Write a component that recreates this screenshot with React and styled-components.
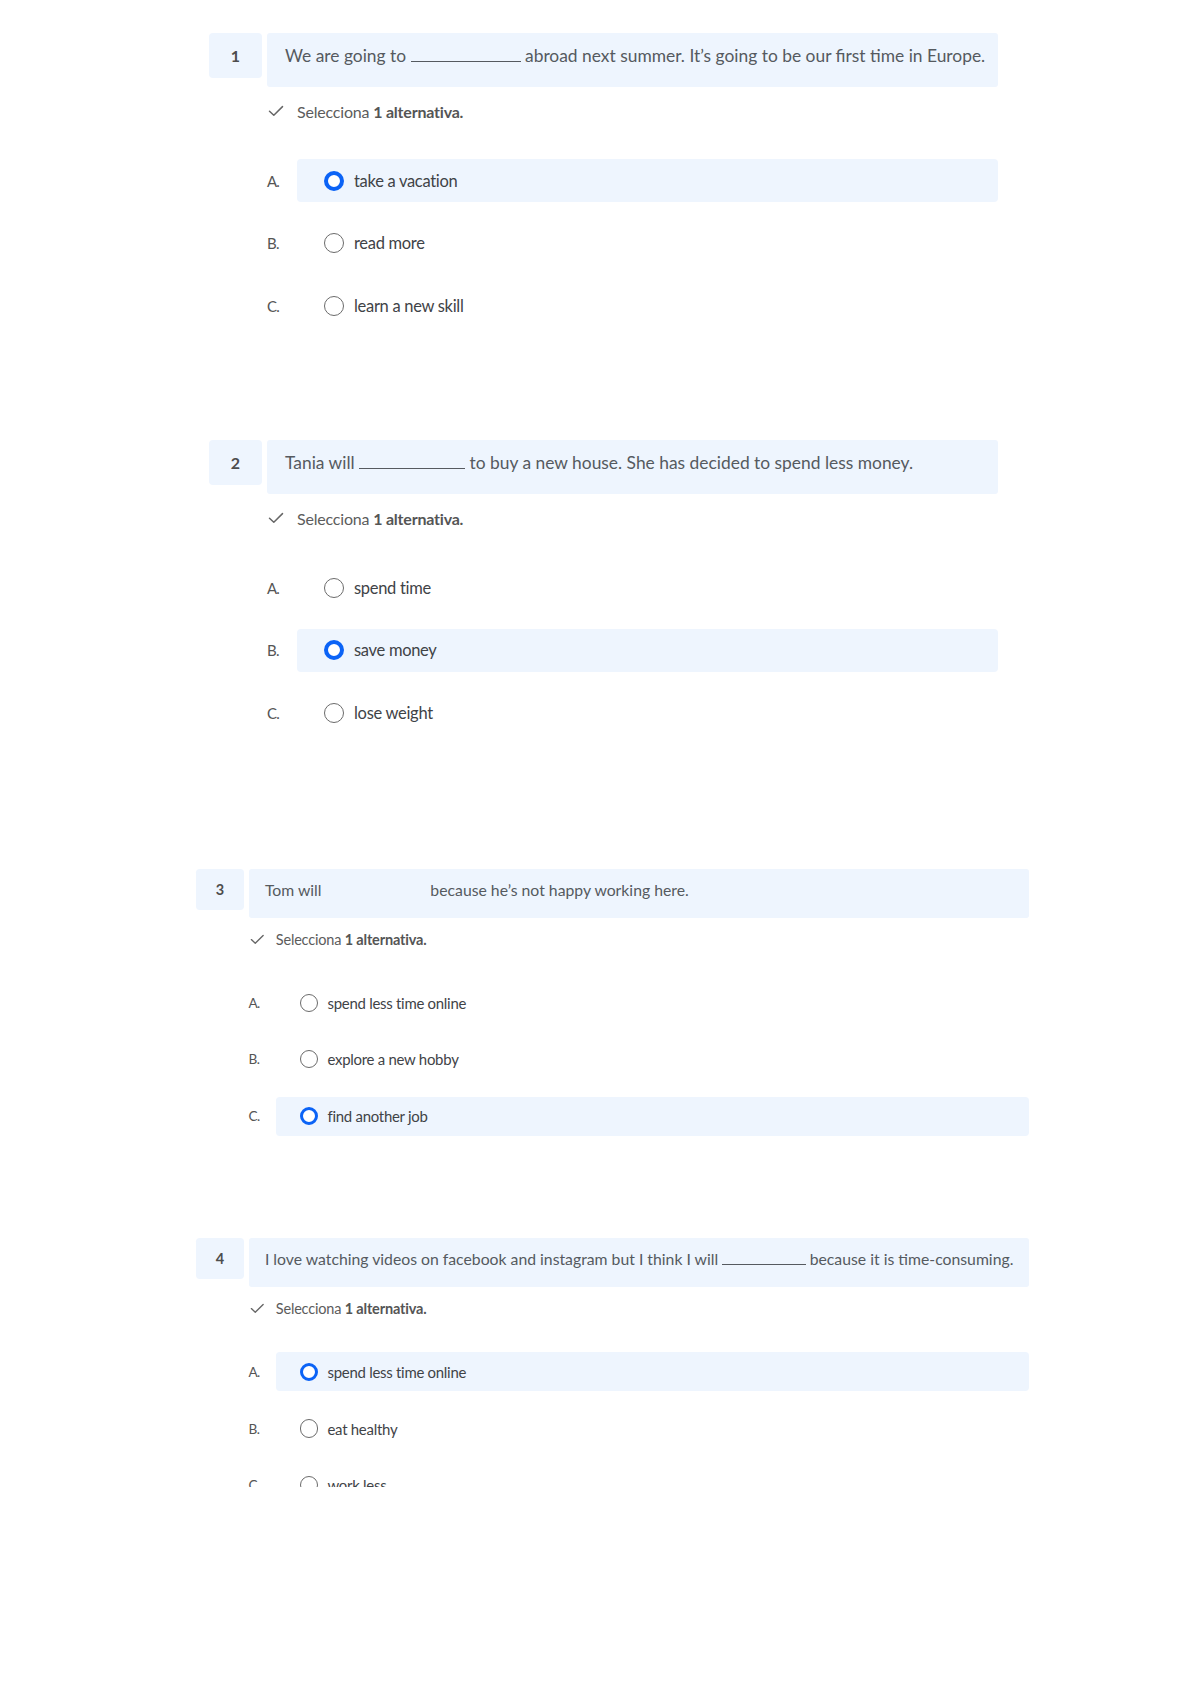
import React from "react";
import styled, { createGlobalStyle } from "styled-components";

const GlobalStyle = createGlobalStyle`
  body {
    margin: 0;
    background: #ffffff;
    font-family: Lato, "Open Sans", "Liberation Sans", sans-serif;
  }
`;

const questionsTop = [
  {
    num: 1,
    parts: ["We are going to ", { blank: 110 }, " abroad next summer. It’s going to be our first time in Europe."],
    options: ["take a vacation", "read more", "learn a new skill"],
    selected: 0,
  },
  {
    num: 2,
    parts: ["Tania will ", { blank: 106 }, " to buy a new house. She has decided to spend less money."],
    options: ["spend time", "save money", "lose weight"],
    selected: 1,
  },
];

const questionsBottom = [
  {
    num: 3,
    parts: ["Tom will", { blank: 120, hidden: true }, "because he’s not happy working here."],
    options: ["spend less time online", "explore a new hobby", "find another job"],
    selected: 2,
  },
  {
    num: 4,
    parts: ["I love watching videos on facebook and instagram but I think I will ", { blank: 92 }, " because it is time-consuming."],
    options: ["spend less time online", "eat healthy", "work less"],
    selected: 0,
  },
];

const Question = ({ q }) => (
  <Block>
    <Header>
      <NumBox>{q.num}</NumBox>
      <Statement>
        {q.parts.map((p, i) =>
          typeof p === "string" ? (
            <span key={i}>{p}</span>
          ) : (
            <Blank key={i} $width={p.blank} $hidden={p.hidden} />
          )
        )}
      </Statement>
    </Header>
    <Hint>
      <svg width="16" height="12" viewBox="0 0 16 12" fill="none">
        <path d="M1.5 6.2 L5.8 10.2 L14.5 1.6" stroke="#666" strokeWidth="1.5" strokeLinecap="round" strokeLinejoin="round" />
      </svg>
      <span>
        Selecciona <b>1 alternativa.</b>
      </span>
    </Hint>
    <Options>
      {q.options.map((o, i) => (
        <OptionRow key={o}>
          <Letter>{["A.", "B.", "C."][i]}</Letter>
          <Choice $active={i === q.selected}>
            <Radio $active={i === q.selected} />
            <ChoiceText>{o}</ChoiceText>
          </Choice>
        </OptionRow>
      ))}
    </Options>
  </Block>
);

const App = () => (
  <Page>
    <GlobalStyle />
    <Sheet $left={209} $top={33}>
      <Group $width={789}>
        {questionsTop.map((q) => (
          <Question key={q.num} q={q} />
        ))}
      </Group>
    </Sheet>
    <Sheet $left={196} $top={135} $height={618}>
      <Group $width={918} $zoom={0.907}>
        {questionsBottom.map((q) => (
          <Question key={q.num} q={q} />
        ))}
      </Group>
    </Sheet>
  </Page>
);

const Page = styled.div`
  width: 1200px;
  min-height: 1696px;
  display: flex;
  flex-direction: column;
`;

const Sheet = styled.div`
  margin-top: ${(p) => p.$top}px;
  padding-left: ${(p) => p.$left}px;
  ${(p) => (p.$height ? `height: ${p.$height}px; overflow: hidden;` : "")}
`;

const Group = styled.div`
  width: ${(p) => p.$width}px;
  zoom: ${(p) => p.$zoom || 1};
  display: flex;
  flex-direction: column;
  gap: 113px;
`;

const Block = styled.div`
  display: flex;
  flex-direction: column;
`;

const Header = styled.div`
  display: flex;
  align-items: flex-start;
  gap: 5px;
`;

const NumBox = styled.div`
  width: 53px;
  height: 45px;
  flex: none;
  display: flex;
  align-items: center;
  justify-content: center;
  background: #eef5fe;
  border-radius: 4px;
  color: #4d4d4d;
  font-size: 16px;
  font-weight: 700;
`;

const Statement = styled.div`
  flex: 1;
  min-width: 0;
  height: 54px;
  box-sizing: border-box;
  padding: 12px 0 0 18px;
  overflow: hidden;
  background: #eef5fe;
  border-radius: 3px;
  color: #555a60;
  font-size: 17.4px;
  white-space: nowrap;
`;

const Blank = styled.span`
  display: inline-block;
  width: ${(p) => p.$width}px;
  height: 1px;
  border-bottom: ${(p) => (p.$hidden ? "none" : "1px solid #555a60")};
  vertical-align: baseline;
`;

const Hint = styled.div`
  margin-top: 12px;
  height: 24px;
  padding-left: 59px;
  display: flex;
  align-items: center;
  gap: 13px;
  color: #5c5c5c;
  font-size: 16px;
  letter-spacing: -0.2px;

  b {
    font-weight: 700;
    color: #555;
  }
`;

const Options = styled.div`
  margin-top: 36px;
  display: flex;
  flex-direction: column;
  gap: 19.5px;
`;

const OptionRow = styled.div`
  display: flex;
  align-items: center;
  padding-left: 58px;
`;

const Letter = styled.div`
  width: 30px;
  flex: none;
  color: #555;
  font-size: 15px;
  letter-spacing: -0.8px;
`;

const Choice = styled.div`
  flex: 1;
  height: 43px;
  display: flex;
  align-items: center;
  gap: 10px;
  padding-left: 27px;
  border-radius: 4px;
  background: ${(p) => (p.$active ? "#eef5fe" : "transparent")};
`;

const Radio = styled.span`
  width: 20px;
  height: 20px;
  flex: none;
  box-sizing: border-box;
  border-radius: 50%;
  background: #fff;
  border: ${(p) => (p.$active ? "4px solid #0b63f6" : "1.5px solid #6b6b6b")};
`;

const ChoiceText = styled.span`
  color: #3f4347;
  font-size: 16.5px;
  letter-spacing: -0.3px;
`;

export default App;
